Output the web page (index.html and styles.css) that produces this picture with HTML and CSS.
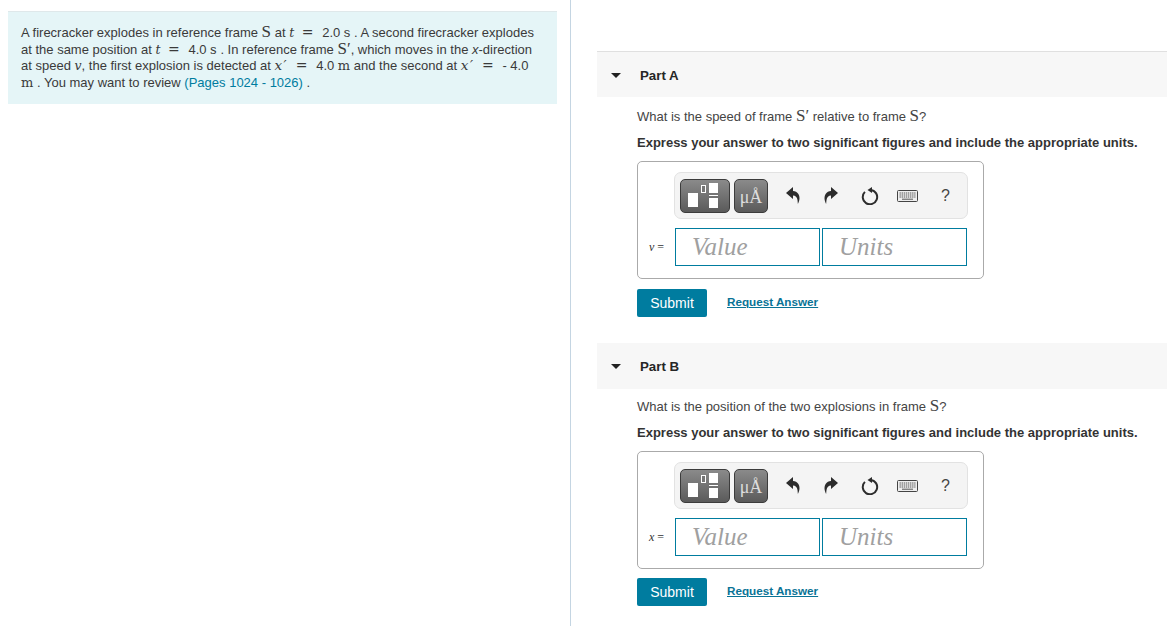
FILE: index.html
```html
<!DOCTYPE html>
<html lang="en">
<head>
<meta charset="utf-8">
<title>Firecracker problem</title>
<link rel="stylesheet" href="styles.css">
</head>
<body>
<svg class="defs" width="0" height="0" aria-hidden="true">
  <defs>
    <symbol id="undo" viewBox="0 0 14 17"><path d="M7 0 0 6l7 6V8.500c2.500 0 4 1.500 4.500 4.500 .1 1 .2 2.500 .4 4 1.600-3 2.400-7 .5-10C11 5 9.300 4.200 7 4z"/></symbol>
    <symbol id="redo" viewBox="0 0 14 17"><path d="M7 0l7 6-7 6V8.500c-2.500 0-4 1.500-4.500 4.500-.1 1-.2 2.500-.4 4C.5 14 -.3 10 1.600 7 3 5 4.700 4.200 7 4z"/></symbol>
    <symbol id="reset" viewBox="0 0 18 18"><path d="M3.900 4.900A7.200 7.200 0 1 0 10 2.900" fill="none" stroke="currentColor" stroke-width="2"/><path d="M11 0v6L6.500 2.900z"/></symbol>
    <symbol id="keyboard" viewBox="0 0 21 12"><rect x=".5" y=".5" width="20" height="11" rx="1" fill="#eee" stroke="#444"/><path d="M2.500 3h16M2.500 5h16M2.500 7h16" stroke="#555" stroke-dasharray="1.400 .7" fill="none"/><path d="M5 9.200h11" stroke="#555" fill="none"/></symbol>
  </defs>
</svg>
<div class="page">
  <aside class="left">
    <div class="intro">
      <p>A firecracker explodes in reference frame <span class="m">S</span> at <i class="v">t</i> <span class="eq">=</span> 2.0 s . A second firecracker explodes at the same position at <i class="v">t</i> <span class="eq">=</span> 4.0 <span class="u">s</span> . In reference frame <span class="m">S′</span>, which moves in the <i>x</i>-direction at speed <i class="v">v</i>, the first explosion is detected at <i class="v xp">x′</i> <span class="eq">=</span> 4.0 <span class="u">m</span> and the second at <i class="v xp">x′</i> <span class="eq">=</span> - 4.0 <span class="u">m</span> . You may want to review <a href="#">(Pages 1024 - 1026)</a> .</p>
    </div>
  </aside>
  <main class="right">
    <section class="part first">
      <header class="part-head"><span class="caret"></span><h2>Part A</h2></header>
      <div class="part-body">
        <p class="q">What is the speed of frame <span class="m">S′</span> relative to frame <span class="m">S</span>?</p>
        <p class="ins">Express your answer to two significant figures and include the appropriate units.</p>
        <div class="answer">
          <div class="toolbar">
            <button class="tb tb-tpl" type="button" aria-label="Templates"><span class="g1"></span><span class="g2"></span><span class="g3"><span></span><span class="bar"></span><span></span></span></button>
            <button class="tb tb-sym" type="button">μÅ</button>
            <svg class="ic i-undo"><use href="#undo"/></svg>
            <svg class="ic i-redo"><use href="#redo"/></svg>
            <svg class="ic i-reset"><use href="#reset"/></svg>
            <svg class="ic i-kbd"><use href="#keyboard"/></svg>
            <span class="help">?</span>
          </div>
          <div class="fields">
            <span class="lbl"><i>v</i> =</span>
            <input class="field" placeholder="Value" aria-label="Value">
            <input class="field" placeholder="Units" aria-label="Units">
          </div>
        </div>
        <div class="actions"><button class="submit" type="button">Submit</button><a class="req" href="#">Request Answer</a></div>
      </div>
    </section>
    <section class="part second">
      <header class="part-head"><span class="caret"></span><h2>Part B</h2></header>
      <div class="part-body">
        <p class="q">What is the position of the two explosions in frame <span class="m">S</span>?</p>
        <p class="ins">Express your answer to two significant figures and include the appropriate units.</p>
        <div class="answer">
          <div class="toolbar">
            <button class="tb tb-tpl" type="button" aria-label="Templates"><span class="g1"></span><span class="g2"></span><span class="g3"><span></span><span class="bar"></span><span></span></span></button>
            <button class="tb tb-sym" type="button">μÅ</button>
            <svg class="ic i-undo"><use href="#undo"/></svg>
            <svg class="ic i-redo"><use href="#redo"/></svg>
            <svg class="ic i-reset"><use href="#reset"/></svg>
            <svg class="ic i-kbd"><use href="#keyboard"/></svg>
            <span class="help">?</span>
          </div>
          <div class="fields">
            <span class="lbl"><i>x</i> =</span>
            <input class="field" placeholder="Value" aria-label="Value">
            <input class="field" placeholder="Units" aria-label="Units">
          </div>
        </div>
        <div class="actions"><button class="submit" type="button">Submit</button><a class="req" href="#">Request Answer</a></div>
      </div>
    </section>
  </main>
</div>
</body>
</html>
```
FILE: styles.css
```css
* { box-sizing: border-box; }
html, body { margin: 0; height: 100%; overflow: hidden; }
body { background: #fff; color: #333; font-family: "Liberation Sans", Arial, sans-serif; font-size: 13px; }
.defs { display: block; height: 0; }
.page { display: flex; height: 626px; }
.left { width: 571px; flex: none; padding: 11px 13px 0 8px; border-right: 1px solid #c4d5e2; }
.intro { background: #e5f5f7; border-top: 1px solid #dfe8ea; padding: 13px 21px 11px 13px; height: 93px; }
.intro p { margin: 0; font-size: 13px; line-height: 16.6px; color: #3a3a3a; }
.intro a { color: #007c9f; text-decoration: none; }
.m, .u, .v, .eq { line-height: 0; }
.m { font-size: 17px; font-family: "Liberation Serif", serif; }
.u { font-size: 13px; font-family: "DejaVu Serif", serif; }
.v { font-family: "DejaVu Serif", serif; font-size: 12.500px; }
.xp { font-size: 13.500px; letter-spacing: 1.500px; }
.eq { font-family: "DejaVu Serif", serif; font-size: 14px; margin: 0 5px 0 4px; }
.right { flex: 1; padding: 51px 0 0 26px; min-width: 0; }
.part-head { height: 46px; display: flex; align-items: center; background: #f7f7f7; }
.first .part-head { border-top: 1px solid #e0e0e0; padding-top: 1px; }
.second { margin-top: 26px; }
.caret { width: 0; height: 0; border-left: 5.500px solid transparent; border-right: 5.500px solid transparent; border-top: 5px solid #222; margin-left: 14px; }
h2 { margin: 0 0 0 19px; font-size: 13.300px; font-weight: 700; color: #262626; }
.part-body { padding: 0 0 0 40px; }
.q { margin: 10px 0 0; font-size: 13px; line-height: 20px; color: #444; }
.second .q { margin-top: 8px; }
.ins { margin: 6px 0 0; font-size: 13px; line-height: 20px; font-weight: 700; color: #333; }
.answer { width: 347px; height: 118px; margin-top: 8px; border: 1px solid #aaa; border-radius: 5px; padding: 10px 15px 0 8px; }
.toolbar { display: flex; align-items: center; height: 47px; margin-left: 28px; background: #f4f4f4; border: 1px solid #e2e2e2; border-radius: 7px; padding: 0 0 0 5px; }
.tb { height: 34px; border: 1px solid #3c3c3c; border-radius: 5px; background: linear-gradient(#8a8a8a, #5a5a5a); padding: 0; color: #ddd; }
.tb-tpl { width: 50px; display: flex; align-items: center; justify-content: flex-start; padding-left: 7px; }
.g1 { flex: none; width: 10px; height: 14px; background: #fff; margin-top: 8px; }
.g2 { flex: none; width: 5px; height: 8px; background: #777; border: 1px solid #fff; margin: -14px 0 0 3px; }
.g3 { flex: none; width: 9px; margin-left: 3px; display: flex; flex-direction: column; gap: 2px; }
.g3 span { display: block; height: 10px; background: #fff; }
.g3 .bar { height: 1px; }
.tb-sym { width: 34px; margin-left: 4px; padding-top: 3px; font: 18px "Liberation Serif", serif; }
.ic { display: block; flex: none; fill: #2c2c2c; color: #2c2c2c; }
.i-undo { width: 14px; height: 17px; margin-left: 18px; }
.i-redo { width: 14px; height: 17px; margin-left: 24px; }
.i-reset { width: 18px; height: 18px; margin-left: 23px; }
.i-kbd { width: 21px; height: 12px; margin-left: 18px; }
.help { margin-left: 23px; font-size: 16px; color: #444; }
.fields { display: flex; align-items: center; margin-top: 9px; }
.lbl { width: 29px; flex: none; padding-left: 3px; font: 12px "Liberation Serif", serif; color: #333; }
.field { width: 145px; height: 38px; border: 1px solid #007c9f; border-radius: 0; background: #fff; padding: 0 0 0 16px; margin-right: 2px; font: italic 25px "Liberation Serif", serif; outline: 0; }
.field::placeholder { color: #a0a0a0; opacity: 1; }
.actions { display: flex; align-items: center; margin-top: 10px; }
.second .actions { margin-top: 9px; }
.submit { width: 70px; height: 28px; border: 0; border-radius: 2px; background: #007c9f; color: #fff; font: 14px "Liberation Sans", Arial, sans-serif; padding: 0; }
.req { margin: 0 0 3px 20px; font-size: 11.700px; font-weight: 700; color: #0a7396; text-decoration: underline; }
```
